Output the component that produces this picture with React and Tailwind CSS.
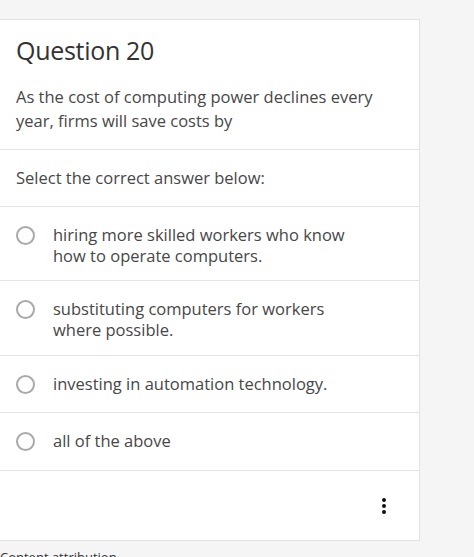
import React from "react";

const options = [
  { text: ["hiring more skilled workers who know", "how to operate computers."], pad: "pt-[17px] pb-[14px]" },
  { text: ["substituting computers for workers", "where possible."], pad: "pt-[17px] pb-[15px]" },
  { text: ["investing in automation technology."], pad: "pt-[17px] pb-[18px]" },
  { text: ["all of the above"], pad: "pt-[17px] pb-[19px]" },
];

function Radio() {
  return <div className="w-[19px] h-[19px] rounded-full border-2 border-[#a9a9a9] bg-white shrink-0 mt-[2px]" />;
}

export default function App() {
  return (
    <div className="w-[474px] h-[557px] overflow-hidden bg-[#f5f5f5] pt-[19px]" style={{ fontFamily: '"Open Sans", sans-serif' }}>
      <div className="w-[420px] bg-white border border-l-0 border-[#e2e2e2]">
        <div className="pl-4 pr-4 pt-[14px] pb-[16px] border-b border-[#e3e3e3]">
          <div className="text-[25px] leading-[32px] text-[#333333] tracking-[-0.3px]">Question 20</div>
          <div className="mt-[19px] text-[16.5px] leading-[24px] text-[#474747]">
            As the cost of computing power declines every
            <br />
            year, firms will save costs by
          </div>
        </div>
        <div className="pl-4 py-[18px] text-[16.5px] leading-[20px] text-[#474747] border-b border-[#e3e3e3]">
          Select the correct answer below:
        </div>
        {options.map((o, i) => (
          <div key={i} className={`flex items-start pl-4 ${o.pad} border-b border-[#e3e3e3]`}>
            <div className="w-[37px] flex">
              <Radio />
            </div>
            <div className="text-[16.5px] leading-[21px] text-[#474747]">
              {o.text.map((t, j) => (
                <div key={j}>{t}</div>
              ))}
            </div>
          </div>
        ))}
        <div className="h-[69px] flex items-center justify-end pr-[33px]">
          <div className="flex flex-col gap-[2px] items-center">
            <div className="w-[4px] h-[4px] rounded-full bg-[#111]" />
            <div className="w-[4px] h-[4px] rounded-full bg-[#111]" />
            <div className="w-[4px] h-[4px] rounded-full bg-[#111]" />
          </div>
        </div>
      </div>
      <div className="pt-[8px] text-[13px] leading-[16px] text-[#333]">Content attribution</div>
    </div>
  );
}
